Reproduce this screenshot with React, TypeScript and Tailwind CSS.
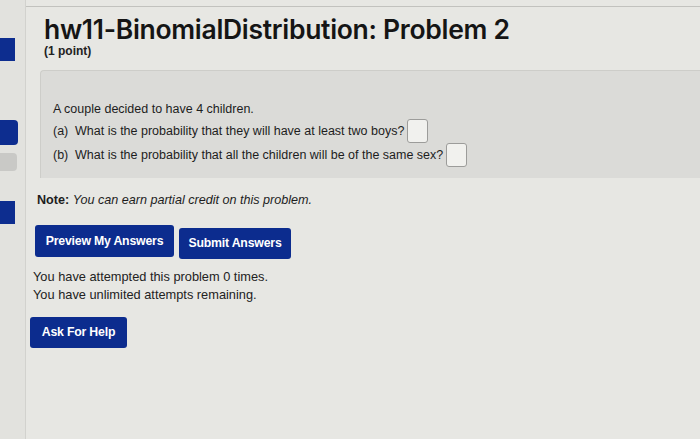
import React from 'react';

const AnswerBox: React.FC = () => (
  <span className="inline-block w-[21px] h-[24px] ml-[3px] bg-[#f1f1ee] border border-[#9c9c9a] rounded-[3px]"></span>
);

const NavyButton: React.FC<{ label: string; className?: string }> = ({ label, className = '' }) => (
  <button
    className={`flex items-center justify-center bg-[#0c2c8e] text-white text-[12.3px] font-bold tracking-[-0.2px] rounded-[3px] ${className}`}
  >
    {label}
  </button>
);

export default function App() {
  return (
    <div
      className="flex w-[700px] h-[439px] overflow-hidden bg-[#e7e7e3] text-[#1d1d1d]"
      style={{ fontFamily: '"Liberation Sans", Arial, sans-serif' }}
    >
      {/* left nav strip */}
      <aside className="w-[26px] shrink-0 bg-[#e2e2de] border-r border-[#d2d2ce] flex flex-col">
        <div className="mt-[38px] w-[15px] h-[23px] bg-[#0d2d8f]"></div>
        <div className="mt-[59px] w-[18px] h-[25px] bg-[#0d2d8f] rounded-r-[4px]"></div>
        <div className="mt-[8px] w-[17px] h-[18px] bg-[#c9c9c6] rounded-r-[4px]"></div>
        <div className="mt-[30px] w-[15px] h-[23px] bg-[#0d2d8f]"></div>
      </aside>

      <main className="flex-1 border-t border-[#c2c2be] mt-[6px] pl-[6px]">
        <header className="pl-[12px] pt-[9px]">
          <h1
            className="text-[26.5px] leading-[26px] font-semibold tracking-[-0.3px] text-[#151515]"
            style={{ fontFamily: 'Inter, "Liberation Sans", sans-serif' }}
          >
            hw11-BinomialDistribution: Problem 2
          </h1>
          <p className="mt-[3px] text-[12px] font-bold leading-[12px] text-[#222]">(1 point)</p>
        </header>

        <section className="mt-[13px] ml-[8px] bg-[#dbdbd8] border-t border-l border-[#cdcdc9] rounded-tl-[4px] pl-[12px] pt-[30px] pb-[11px] text-[12.5px]">
          <p className="leading-[16px]">A couple decided to have 4 children.</p>
          <p className="mt-[2px] leading-[24px] flex items-center">
            <span className="w-[22px]">(a)</span>
            <span>What is the probability that they will have at least two boys?</span>
            <AnswerBox />
          </p>
          <p className="leading-[24px] flex items-center">
            <span className="w-[22px]">(b)</span>
            <span>What is the probability that all the children will be of the same sex?</span>
            <AnswerBox />
          </p>
        </section>

        <p className="mt-[14px] pl-[5px] text-[12.6px] leading-[16px]">
          <span className="font-bold">Note:</span> <em>You can earn partial credit on this problem.</em>
        </p>

        <div className="mt-[17px] pl-[3px] flex gap-[5px]">
          <NavyButton label="Preview My Answers" className="w-[139px] h-[32px]" />
          <NavyButton label="Submit Answers" className="w-[112px] h-[31px] mt-[3px]" />
        </div>

        <div className="mt-[9px] pl-[1px] text-[12.8px] leading-[18px] text-[#222]">
          <p>You have attempted this problem 0 times.</p>
          <p>You have unlimited attempts remaining.</p>
        </div>

        <NavyButton label="Ask For Help" className="mt-[13px] -ml-[2px] w-[97px] h-[31px]" />
      </main>
    </div>
  );
}
